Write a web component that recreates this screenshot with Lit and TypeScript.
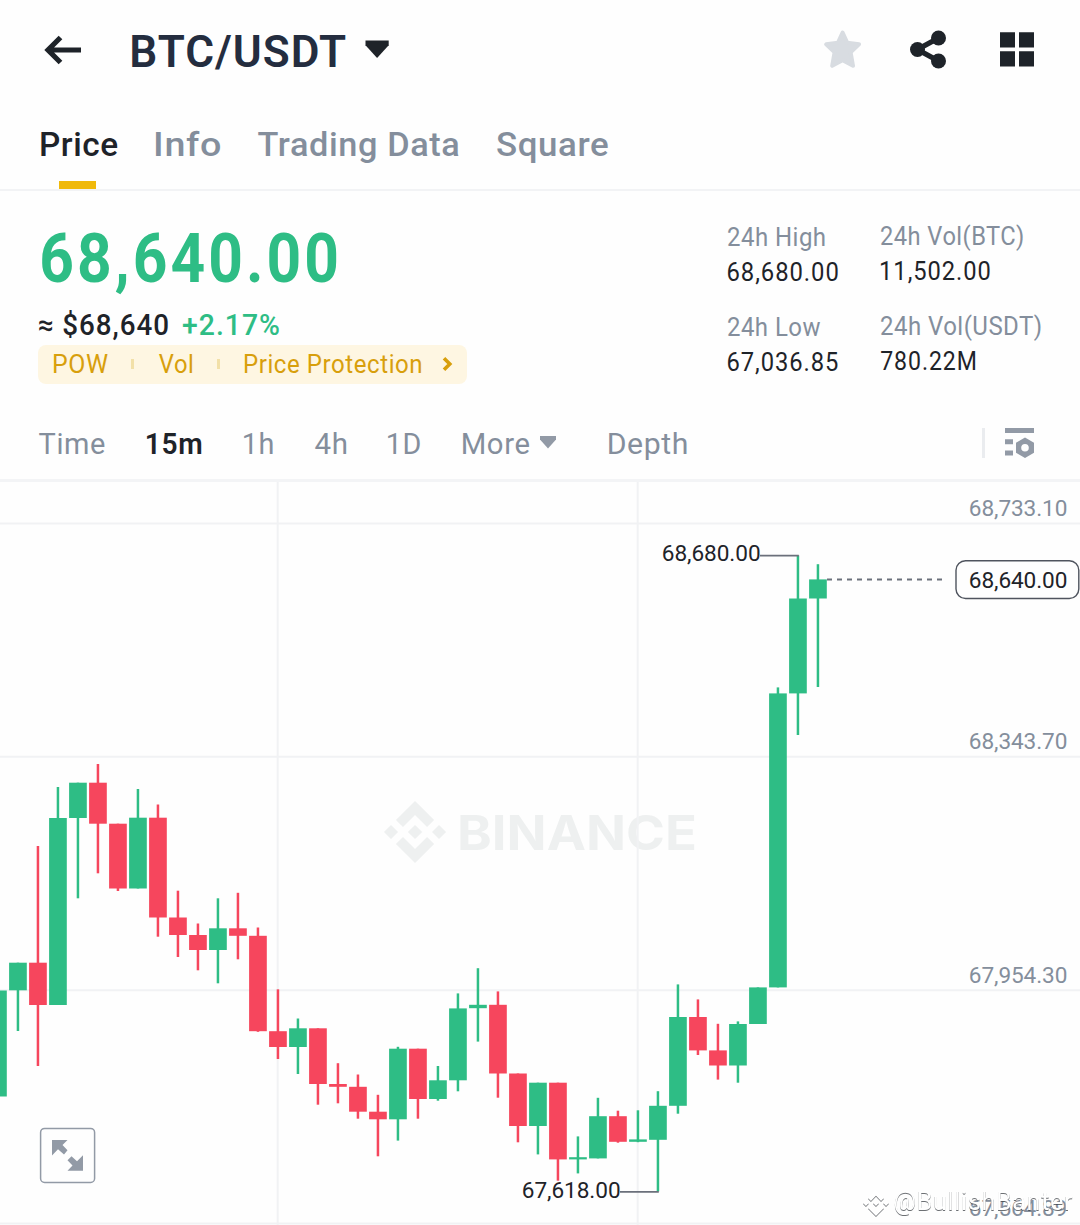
import { LitElement, html, svg, css } from "lit";
import { customElement, property, state } from "lit/decorators.js";
import { classMap } from "lit/directives/class-map.js";

/** A line of text whose visible glyphs span exactly `span` pixels. */
@customElement("fit-text")
class FitText extends LitElement {
  @property({ type: Number }) span = 0;
  @property() text = "";
  @state() private fit = "none";

  static styles = css`
    :host { display: block; flex: none; white-space: pre; }
    .run { display: inline-block; transform-origin: 0 50%; }
  `;

  firstUpdated() {
    // measured at ten times the size, since glyph bounds are rounded to whole pixels
    const cs = getComputedStyle(this);
    const ctx = document.createElement("canvas").getContext("2d")!;
    ctx.font = `${cs.fontWeight} ${parseFloat(cs.fontSize) * 10}px ${cs.fontFamily}`;
    (ctx as any).letterSpacing = `${(parseFloat(cs.letterSpacing) || 0) * 10}px`;
    const m = ctx.measureText(this.text);
    const left = m.actualBoundingBoxLeft / 10;
    const k = this.span / (left + m.actualBoundingBoxRight / 10);
    this.fit = `translateX(${left * k}px) scaleX(${k})`;
  }

  render() {
    return html`<style>:host { width: ${this.span}px; }</style><span class="run" style="transform:${this.fit}">${this.text}</span>`;
  }
}

const fit = (text: string, span: number, cls = "") =>
  html`<fit-text class=${cls} .text=${text} .span=${span}></fit-text>`;

// centre x, high, body top, body bottom, low, direction
type Candle = [number, number, number, number, number, "up" | "down"];
const CANDLES: Candle[] = [
  [-2, 990.5, 990.5, 1096.5, 1096.5, "up"],
  [18, 962.7, 962.7, 990.3, 1031, "up"],
  [38, 846, 962.7, 1005, 1066, "down"],
  [58, 787, 818, 1005, 1005, "up"],
  [78, 782.7, 782.7, 818, 898.3, "up"],
  [98, 764, 782.7, 823.7, 873.3, "down"],
  [118, 823.7, 823.7, 888.5, 891, "down"],
  [138, 789, 817.7, 888.5, 888.5, "up"],
  [158, 804.5, 817.7, 917.5, 936.7, "down"],
  [178, 890.7, 917.5, 935, 957, "down"],
  [198, 923.5, 935, 950, 970.3, "down"],
  [218, 898.3, 928.3, 950, 983.3, "up"],
  [238, 892.8, 928.3, 935.8, 959.3, "down"],
  [258, 927.5, 935.8, 1031.2, 1031.8, "down"],
  [278, 989.3, 1031.2, 1047, 1059, "down"],
  [298, 1018.5, 1028.3, 1047, 1074, "up"],
  [318, 1028.3, 1028.3, 1084, 1104.7, "down"],
  [338, 1063.2, 1084, 1086.8, 1103.3, "down"],
  [358, 1074.5, 1086.8, 1111.7, 1118.7, "down"],
  [378, 1094.8, 1111.7, 1119.3, 1156.3, "down"],
  [398, 1046.8, 1048.7, 1119.3, 1140.6, "up"],
  [418, 1048.7, 1048.7, 1099, 1118.7, "down"],
  [438, 1066, 1080.3, 1099, 1100.7, "up"],
  [458, 993.4, 1008.4, 1080.3, 1091.3, "up"],
  [478, 968.2, 1004.8, 1008.2, 1041.6, "up"],
  [498, 991.4, 1004.8, 1073.5, 1097.7, "down"],
  [518, 1073.5, 1073.5, 1126, 1142.3, "down"],
  [538, 1082.7, 1082.7, 1126, 1154.4, "up"],
  [558, 1082.7, 1082.7, 1159.4, 1180.7, "down"],
  [578, 1136.4, 1157.2, 1159.4, 1173.4, "up"],
  [598, 1097.8, 1116.2, 1158.4, 1158.4, "up"],
  [618, 1110.7, 1116.2, 1141.8, 1142.7, "down"],
  [638, 1110.3, 1139.4, 1141.8, 1142.2, "up"],
  [658, 1091.2, 1105.8, 1139.8, 1191.4, "up"],
  [678, 984.4, 1017, 1105.8, 1113.7, "up"],
  [698, 999.4, 1017, 1050.4, 1055, "down"],
  [718, 1023.8, 1050.4, 1065.5, 1079.6, "down"],
  [738, 1021.4, 1024, 1065.5, 1082.7, "up"],
  [758, 987.4, 987.4, 1024, 1024, "up"],
  [778, 687.4, 693.4, 987.4, 987.4, "up"],
  [798, 555.4, 598.5, 693.4, 735, "up"],
  [818, 564.2, 579.4, 598.5, 687, "up"],
];

const AXIS: [string, number][] = [
  ["68,733.10", 523.5],
  ["68,343.70", 756.8],
  ["67,954.30", 990.2],
  ["67,564.89", 1223.5],
];

const DIAMONDS =
  "M38.73 53.2l24.59-24.58 24.6 24.6 14.3-14.31L63.32 0l-38.9 38.9zM0 63.31l14.3-14.31 14.31 14.31-14.31 14.3zM38.73 73.41l24.59 24.59 24.6-24.6 14.31 14.29-38.9 38.91-38.91-38.88zM98 63.31l14.3-14.31 14.31 14.3-14.31 14.32zM77.83 63.3L63.32 48.78 48.81 63.28l14.51 14.5z";

@customElement("price-chart")
class PriceChart extends LitElement {
  static styles = css`
    :host { display: block; height: 743px; }
    svg { display: block; font-family: Roboto, "Liberation Sans", sans-serif; font-size: 22.6px; }
    .grid { stroke: #f1f2f4; stroke-width: 2; }
    .up { fill: #2ebd85; }
    .down { fill: #f6465d; }
    .axis { fill: #848e9c; }
    .ink { fill: #1e2329; }
    .lead { stroke: #6b707b; stroke-width: 1.8; fill: none; }
    .last { stroke-dasharray: 5 5; }
    .pill { fill: #fefefe; stroke: #4f545e; stroke-width: 1.4; }
    .brand { fill: #eef0f0; }
    .brand-name { font: 700 47.5px Inter, "Liberation Sans", sans-serif; }
    .expand { fill: #fefefe; stroke: #929aa6; stroke-width: 1.5; }
    .expand-arrow { fill: #929aa6; }
    .credit { fill: #fff; font-size: 25px; filter: drop-shadow(0.5px 1px 0.5px rgba(60, 64, 70, 0.75)); }
  `;

  render() {
    return html`<svg width="1080" height="743" viewBox="0 482 1080 743">
      <g class="brand">
        <path transform="translate(384 801) scale(.49)" d=${DIAMONDS} />
        <text class="brand-name" x="457" y="849.5" textLength="240" lengthAdjust="spacingAndGlyphs">BINANCE</text>
      </g>
      <g class="grid">
        <path d="M277.7 482V1225M637.7 482V1225" />
        ${AXIS.map(([, y]) => svg`<path d="M0 ${y}H1080" />`)}
      </g>
      <g class="axis">
        ${AXIS.map(([label, y]) => svg`<text x="968.8" y=${y - 7.4} textLength="98.6">${label}</text>`)}
      </g>
      ${CANDLES.map(
        ([x, high, top, bottom, low, dir]) => svg`<g class=${dir}>
          <rect x=${x - 1.3} y=${high} width="2.5" height=${low - high} />
          <rect x=${x - 8.9} y=${top} width="17.7" height=${bottom - top} />
        </g>`
      )}
      <path class="lead" d="M760 555.6H798.8M620 1191.8H658.8" />
      <path class="lead last" d="M827 579.5H943" />
      <text class="ink" x="661.8" y="561.2" textLength="98.8">68,680.00</text>
      <text class="ink" x="521.8" y="1198.3" textLength="98.8">67,618.00</text>
      <rect class="pill" x="956" y="560.8" width="122.8" height="37.7" rx="9.5" />
      <text class="ink" x="968.8" y="588.4" textLength="98.6">68,640.00</text>
      <rect class="expand" x="40.6" y="1128.4" width="54" height="54" rx="4" />
      <path class="expand-arrow" d="M52 1140H67.5L62.5 1145L67.5 1150.3L64 1154.4L58 1149.3L52 1155.5ZM83 1170.8H67.5L72.5 1165.6L67.5 1160.2L71.5 1156.3L77 1161.3L83 1155.2Z" />
      <g class="credit">
        <path transform="translate(863 1190) scale(.205)" d=${DIAMONDS} />
        <text x="893.5" y="1210" textLength="179">@BullishBanter</text>
      </g>
    </svg>`;
  }
}

const TABS: [string, number][] = [["Price", 76.5], ["Info", 64], ["Trading Data", 200.5], ["Square", 111]];

@customElement("app-root")
class AppRoot extends LitElement {
  static styles = css`
    :host {
      display: block; width: 1080px; height: 1225px; overflow: hidden; background: #fefefe;
      color: #1e2329; font-family: Roboto, "Liberation Sans", sans-serif;
    }
    svg { display: block; flex: none; }
    .bar { display: flex; align-items: center; box-sizing: border-box; height: 100px; padding: 0 46px 0 44px; }
    .pair { margin: 4px 19.5px 0 49.5px; font-size: 44.5px; font-weight: 600; line-height: 60px; letter-spacing: 1px; color: #242d3f; }
    .actions { display: flex; gap: 49px; margin-left: auto; }
    .grid-icon { margin-left: 4px; }
    .tabs { display: flex; gap: 38.5px; padding-left: 40.5px; border-bottom: 2px solid #f2f3f5; }
    .tab { display: flex; flex-direction: column; align-items: center; height: 81px; padding-top: 8px;
      font-size: 34px; font-weight: 500; line-height: 73px; letter-spacing: 0.6px; color: #848e9c; }
    .tab.active { color: #1e2329; }
    .mark { width: 37px; height: 8px; margin-right: 2px; background: #f0b90b; }
    .summary { display: flex; justify-content: space-between; height: 217px; }
    .quote { padding: 33px 0 0 38px; }
    .price { margin-left: 3.5px; font-size: 69px; font-weight: 700; line-height: 69px; letter-spacing: 3.5px; color: #2ebd85; }
    .change { display: flex; gap: 15px; margin: 13px 0 0 1px; font-size: 29px; font-weight: 500; line-height: 38px; letter-spacing: 1px; }
    .gain { color: #2ebd85; }
    .tags { display: flex; align-items: center; box-sizing: border-box; width: 429px; height: 39px; margin-top: 0.5px; padding-left: 16px;
      border-radius: 8px; background: #fef6e2; color: #d89f0c; font-size: 25.5px; line-height: 39px; letter-spacing: 0.6px; }
    .sep { width: 3px; height: 10px; margin: 0 25px 0 23.5px; background: #f2e0a8; }
    .sep.wide { margin-left: 25px; margin-right: 24.5px; }
    .chev { margin-left: 21.5px; }
    .stats { display: flex; width: 352px; padding-top: 30px; font-size: 25px; line-height: 30px; letter-spacing: 1px; }
    .col { width: 152.5px; padding-top: 1px; }
    .col + .col { width: 199.5px; padding-top: 0; }
    .name { color: #848e9c; font-size: 25.5px; letter-spacing: 0.5px; }
    .value { margin: 6px 0 24px; }
    .tools { display: flex; align-items: center; box-sizing: border-box; height: 74px; padding: 1px 45px 0 39px;
      border-bottom: 3px solid #f3f4f6; font-size: 29px; line-height: 40px; letter-spacing: 0.6px; color: #848e9c; }
    .frames { display: flex; align-items: center; gap: 42.6px; }
    .on { color: #1e2329; font-weight: 600; }
    .more { display: flex; align-items: center; gap: 11px; }
    .depth { margin-left: 53px; }
    .rule { width: 3px; height: 30px; margin: 0 20.5px 3px auto; background: #eaecef; }
    .settings { margin: 0 1px 4px 0; }
  `;

  private stat(label: string, lw: number, value: string, vw: number) {
    return html`${fit(label, lw, "name")}${fit(value, vw, "value")}`;
  }

  render() {
    return html`
      <header class="bar">
        <svg width="38" height="40" viewBox="44 30 38 40" fill="none" stroke="#1e2329" stroke-width="5.2">
          <path d="M81 50H48M60.5 37.5L48 50L60.5 62.5" />
        </svg>
        ${fit("BTC/USDT", 214, "pair")}
        <svg width="24" height="40" viewBox="365 30 24 40"><path fill="#1e2329" d="M365.5 40.5H388.7V45.2L377.1 58L365.5 45.2Z" /></svg>
        <div class="actions">
          <svg width="37" height="40" viewBox="824 30 37 40">
            <path fill="#d8dce1" stroke="#d8dce1" stroke-width="4" stroke-linejoin="round" d="M842.6 32.5L847.3 42.8L859 44.3L850.6 52.2L853 65.8L842.6 60.3L832.2 65.8L834.6 52.2L826.2 44.3L837.9 42.8Z" />
          </svg>
          <svg width="37" height="40" viewBox="910 30 37 40" fill="#1e2329">
            <path d="M938.5 38L917.5 49.5L938.5 61" fill="none" stroke="#1e2329" stroke-width="5.4" />
            <circle cx="938.5" cy="38" r="7.5" /><circle cx="917.5" cy="49.5" r="7.5" /><circle cx="938.5" cy="61" r="7.5" />
          </svg>
          <svg class="grid-icon" width="34" height="40" viewBox="1000 30 34 40" fill="#1e2329">
            <path d="M1000 32.3h15v15.3h-15zM1019 32.3h15v15.3h-15zM1000 51.2h15v15.3h-15zM1019 51.2h15v15.3h-15z" />
          </svg>
        </div>
      </header>
      <nav class="tabs">
        ${TABS.map(([label, w], i) => html`<div class=${classMap({ tab: true, active: i === 0 })}>
          ${fit(label, w)}${i === 0 ? html`<div class="mark"></div>` : ""}
        </div>`)}
      </nav>
      <section class="summary">
        <div class="quote">
          ${fit("68,640.00", 294.5, "price")}
          <div class="change">${fit("≈ $68,640", 129)}${fit("+2.17%", 96, "gain")}</div>
          <div class="tags">
            ${fit("POW", 53.5)}<i class="sep"></i>${fit("Vol", 33)}<i class="sep wide"></i>${fit("Price Protection", 176)}
            <svg class="chev" width="11" height="16" viewBox="0 0 11 16" fill="none" stroke="#d89f0c" stroke-width="3.6"><path d="M2 2.2L7.8 8L2 13.8" /></svg>
          </div>
        </div>
        <div class="stats">
          <div class="col">${this.stat("24h High", 96.5, "68,680.00", 109.5)}${this.stat("24h Low", 92, "67,036.85", 109.5)}</div>
          <div class="col">${this.stat("24h Vol(BTC)", 141.5, "11,502.00", 108.5)}${this.stat("24h Vol(USDT)", 159.5, "780.22M", 94)}</div>
        </div>
      </section>
      <section class="tools">
        <div class="frames">
          ${fit("Time", 65.5)}${fit("15m", 54, "on")}${fit("1h", 28.5)}${fit("4h", 31)}${fit("1D", 32)}
          <div class="more">
            ${fit("More", 66)}
            <svg width="16" height="18" viewBox="0 0 16 18"><path fill="#929aa6" d="M0 1H16V4.5L8 13.6L0 4.5Z" /></svg>
          </div>
        </div>
        ${fit("Depth", 77.5, "depth")}
        <div class="rule"></div>
        <svg class="settings" width="29" height="31" viewBox="0 0 29 31" fill="#929aa6">
          <path d="M0 1h29v5H0zM0 12.2h8v5H0zM0 23.5h8v5H0z" />
          <path fill-rule="evenodd" d="M20 10.6L29 15.7V25.8L20 30.9L11 25.8V15.7ZM20 17a3.8 3.8 0 1 0 0 7.6a3.8 3.8 0 1 0 0-7.6Z" />
        </svg>
      </section>
      <price-chart></price-chart>
    `;
  }
}
